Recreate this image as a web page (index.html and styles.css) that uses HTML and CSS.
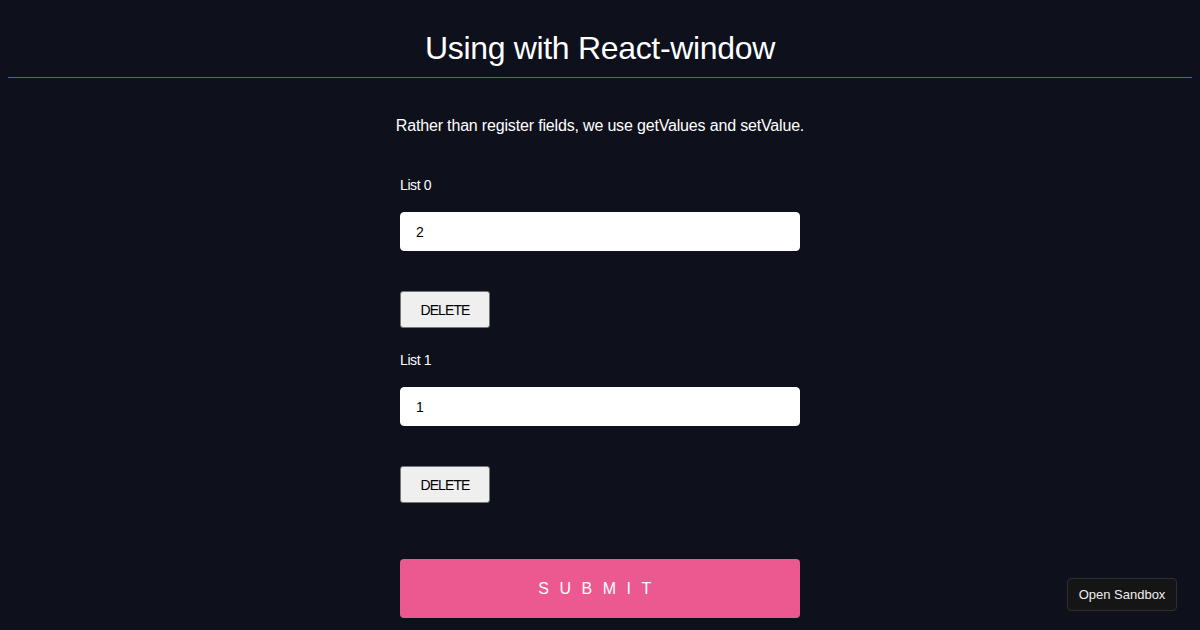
FILE: index.html
```html
<!DOCTYPE html>
<html lang="en">
<head>
<meta charset="utf-8">
<title>Using with React-window</title>
<link rel="stylesheet" href="styles.css">
</head>
<body>
  <h1 class="title">Using with React-window</h1>
  <p class="desc">Rather than register fields, we use getValues and setValue.</p>
  <form class="form">
    <div class="item">
      <label class="label">List 0</label>
      <input class="field" type="text" value="2">
      <button class="delete" type="button">DELETE</button>
    </div>
    <div class="item">
      <label class="label">List 1</label>
      <input class="field" type="text" value="1">
      <button class="delete" type="button">DELETE</button>
    </div>
    <button class="submit" type="submit">Submit</button>
  </form>
  <button class="sandbox" type="button">Open Sandbox</button>
</body>
</html>
```
FILE: styles.css
```css
html, body {
  background: #0e101c;
}
body {
  margin: 0;
  padding: 0 8px;
  font-family: "Liberation Sans", Arial, sans-serif;
  color: #ffffff;
  height: 630px;
  overflow: hidden;
}
.title {
  margin: 30px 0 0;
  padding-bottom: 10px;
  border-bottom: 1px solid rgb(79, 98, 148);
  font-size: 32px;
  font-weight: 400;
  letter-spacing: -0.32px;
  text-align: center;
  color: #ffffff;
}
.desc {
  margin: 39px 0 18px;
  font-size: 16px;
  line-height: 18px;
  letter-spacing: -0.17px;
  text-align: center;
}
.form {
  width: 400px;
  margin: 0 auto;
}
.item {
  display: flex;
  flex-direction: column;
  align-items: flex-start;
}
.label {
  display: block;
  margin-top: 18px;
  margin-bottom: 13px;
  line-height: 28px;
  font-size: 14px;
  letter-spacing: -0.4px;
  color: #ffffff;
}
.field {
  box-sizing: border-box;
  width: 100%;
  height: 39px;
  margin: 0;
  padding: 10px 15px;
  border: 1px solid #ffffff;
  border-radius: 4px;
  background: #ffffff;
  font-family: "Liberation Sans", Arial, sans-serif;
  font-size: 14px;
  color: #000000;
}
.delete {
  box-sizing: border-box;
  width: 90px;
  height: 37px;
  margin-top: 40px;
  padding: 0;
  border: 1px solid #767676;
  border-radius: 3px;
  background: #efefef;
  font-family: "Liberation Sans", Arial, sans-serif;
  font-size: 14px;
  letter-spacing: -0.9px;
  color: #000000;
}
.submit {
  display: block;
  box-sizing: border-box;
  width: 100%;
  height: 59px;
  margin-top: 56px;
  padding: 0;
  border: none;
  border-radius: 4px;
  background: #ec5990;
  color: #ffffff;
  font-family: "Liberation Sans", Arial, sans-serif;
  font-size: 16px;
  text-transform: uppercase;
  letter-spacing: 10.5px;
}
.sandbox {
  position: fixed;
  right: 23px;
  bottom: 19px;
  box-sizing: border-box;
  width: 110px;
  height: 33px;
  padding: 0;
  border: 1px solid #2e2e2e;
  border-radius: 4px;
  background: #151515;
  color: #eeeeee;
  font-family: "Liberation Sans", Arial, sans-serif;
  font-size: 13px;
}
```
